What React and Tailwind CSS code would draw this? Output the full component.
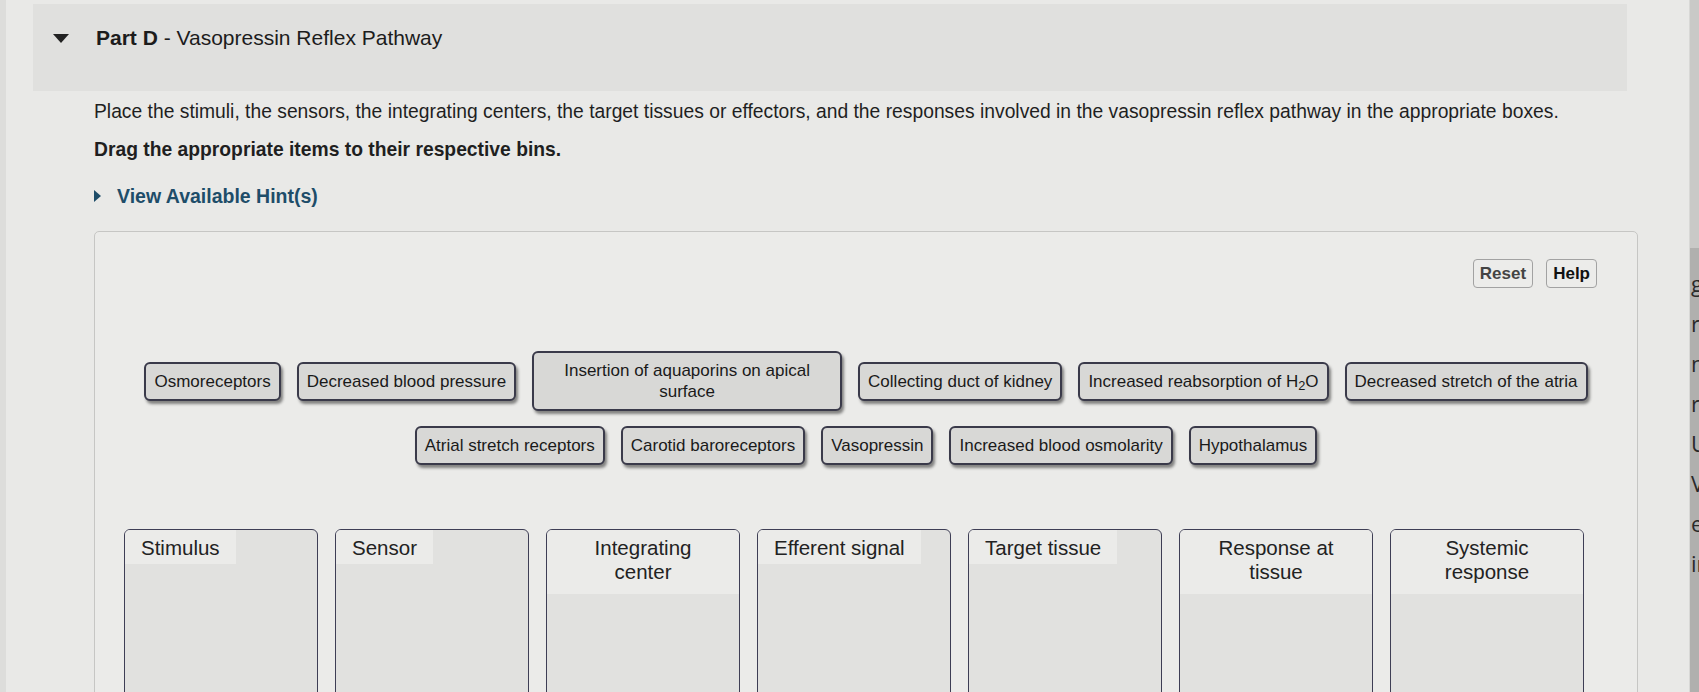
const row1 = [
  { t: "Osmoreceptors" },
  { t: "Decreased blood pressure" },
  { t: "Insertion of aquaporins on apical surface", wide: true },
  { t: "Collecting duct of kidney" },
  { t: "h2o" },
  { t: "Decreased stretch of the atria" },
];

const row2 = [
  { t: "Atrial stretch receptors" },
  { t: "Carotid baroreceptors" },
  { t: "Vasopressin" },
  { t: "Increased blood osmolarity" },
  { t: "Hypothalamus" },
];

const bins = [
  { label: "Stimulus", center: false },
  { label: "Sensor", center: false },
  { label: ["Integrating", "center"], center: true },
  { label: "Efferent signal", center: false },
  { label: "Target tissue", center: false },
  { label: ["Response at", "tissue"], center: true },
  { label: ["Systemic", "response"], center: true },
];

const stripChars = ["g", "r", "n", "r", "U", "V", "e", "in"];

function Item({ item }) {
  const content =
    item.t === "h2o" ? (
      <>
        Increased reabsorption of H<sub>2</sub>O
      </>
    ) : (
      item.t
    );
  return (
    <div
      className={
        item.wide
          ? "w-[310px] text-center whitespace-normal border-2 border-[#3a3a4a] rounded-[6px] bg-[#d8d8d6] px-[8px] py-[7px] text-[17px] leading-[21px] text-[#1a1a1a] shadow-[2px_3px_3px_rgba(0,0,0,0.45)]"
          : "whitespace-nowrap border-2 border-[#3a3a4a] rounded-[6px] bg-[#d8d8d6] px-[8px] py-[7px] text-[17px] leading-[21px] text-[#1a1a1a] shadow-[2px_3px_3px_rgba(0,0,0,0.45)]"
      }
    >
      {content}
    </div>
  );
}

function Bin({ bin }) {
  return (
    <div className="w-[194px] h-[200px] shrink-0 border-[1.5px] border-[#3e3e55] rounded-[6px] bg-[#e1e1df] overflow-hidden">
      {bin.center ? (
        <div className="bg-[#ebebe9] text-center pt-[6px] pb-[10px] text-[20.5px] leading-[24px] text-[#222]">
          {bin.label[0]}
          <br />
          {bin.label[1]}
        </div>
      ) : (
        <div>
          <span className="inline-block bg-[#ebebe9] px-[16px] pt-[6px] pb-[4px] text-[20.5px] leading-[24px] text-[#222]">
            {bin.label}
          </span>
        </div>
      )}
    </div>
  );
}

export default function App() {
  return (
    <div className="w-[1699px] h-[692px] overflow-hidden flex bg-[#e9e9e7] text-[#1d1d1d] font-['Liberation_Sans',Arial,sans-serif]">
      <div className="w-[6px] shrink-0 bg-[#dddddb]" />
      <div className="flex-1 min-w-0 overflow-hidden pt-[4px]">
        {/* header band */}
        <div className="ml-[27px] w-[1594px] h-[87px] bg-[#e0e0de] flex items-start pl-[20px] pt-[20px]">
          <div className="h-[28px] flex items-center">
            <svg width="16" height="9" viewBox="0 0 16 9">
              <polygon points="0,0 16,0 8,9" fill="#222" />
            </svg>
          </div>
          <div className="ml-[27px] text-[21px] leading-[28px] text-[#1c1c1c]">
            <span className="font-bold">Part D</span> - Vasopressin Reflex Pathway
          </div>
        </div>

        <div className="ml-[88px] mt-[9px] text-[19.3px] leading-[24px] text-[#1f1f1f] whitespace-nowrap">
          Place the stimuli, the sensors, the integrating centers, the target tissues or effectors, and the responses involved in the vasopressin reflex pathway in the appropriate boxes.
        </div>
        <div className="ml-[88px] mt-[14px] text-[19.3px] leading-[24px] font-bold text-[#1f1f1f]">
          Drag the appropriate items to their respective bins.
        </div>
        <div className="ml-[88px] mt-[22px] flex items-center text-[19.5px] leading-[24px] font-bold text-[#1e4d69]">
          <svg width="7" height="12" viewBox="0 0 7 12">
            <polygon points="0,0 7,6 0,12" fill="#1e4d69" />
          </svg>
          <span className="ml-[16px]">View Available Hint(s)</span>
        </div>

        {/* main box */}
        <div className="ml-[88px] mt-[23px] w-[1544px] h-[520px] border border-[#c6c6c4] rounded-[5px] bg-[#ebebe9] pt-[27px]">
          <div className="flex justify-end gap-[13px] pr-[40px]">
            <div className="border border-[#a2a2a2] rounded-[4px] bg-[#ececea] px-[6px] py-[3px] text-[17px] leading-[21px] font-bold text-[#444]">
              Reset
            </div>
            <div className="border border-[#a2a2a2] rounded-[4px] bg-[#ececea] px-[6px] py-[3px] text-[17px] leading-[21px] font-bold text-[#111]">
              Help
            </div>
          </div>

          <div className="mt-[63px] flex justify-center items-center gap-[16px]">
            {row1.map((it, i) => (
              <Item key={i} item={it} />
            ))}
          </div>
          <div className="mt-[15px] flex justify-center items-center gap-[16px]">
            {row2.map((it, i) => (
              <Item key={i} item={it} />
            ))}
          </div>

          <div className="mt-[64px] flex gap-[17px] pl-[29px]">
            {bins.map((b, i) => (
              <Bin key={i} bin={b} />
            ))}
          </div>
        </div>
      </div>

      {/* right screen edge strip */}
      <div className="w-[10px] shrink-0 flex flex-col overflow-hidden border-l border-[#d8d8d6]">
        <div className="h-[248px] shrink-0 bg-[#c9c9c7]" />
        <div className="flex-1 bg-[#b0b0ae] pt-[15px] pl-[1px] flex flex-col font-['Open_Sans',sans-serif] text-[22px] leading-[40px] text-[#2a2a2a] whitespace-nowrap">
          {stripChars.map((c, i) => (
            <div key={i}>{c}</div>
          ))}
        </div>
      </div>
    </div>
  );
}
